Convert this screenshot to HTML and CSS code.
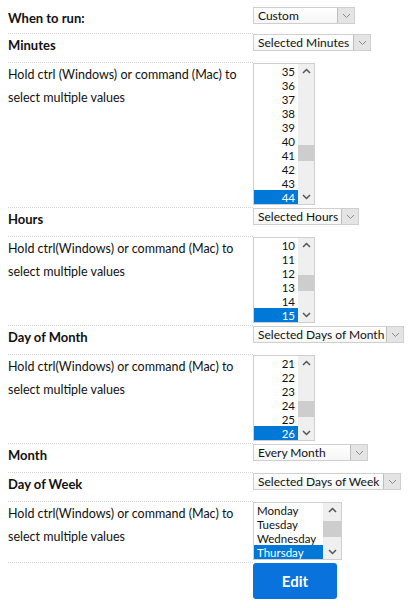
FILE: index.html
```html
<!DOCTYPE html>
<html lang="en">

<head>
    <meta charset="UTF-8">
    <meta name="viewport" content="width=device-width, initial-scale=1.0">
    <title>Schedule</title>
    <link rel="stylesheet" href="styles.css">
</head>

<body>
    <div class="form">
        <!-- when to run -->
        <div class="row first">
            <div class="label title">When to run:</div>
            <div class="field">
                <div class="select w-custom">
                    <span class="value">Custom</span>
                    <span class="arrow"><svg width="9" height="6" viewBox="0 0 9 6"><polyline points="1,1 4.5,4.5 8,1" fill="none" stroke="#8a8a8a" stroke-width="1"/></svg></span>
                </div>
            </div>
        </div>

        <!-- minutes -->
        <div class="row">
            <div class="label title">Minutes</div>
            <div class="field">
                <div class="select w-minutes">
                    <span class="value">Selected Minutes</span>
                    <span class="arrow"><svg width="9" height="6" viewBox="0 0 9 6"><polyline points="1,1 4.5,4.5 8,1" fill="none" stroke="#8a8a8a" stroke-width="1"/></svg></span>
                </div>
            </div>
        </div>
        <div class="row">
            <div class="label hint">Hold ctrl (Windows) or command (Mac) to select multiple values</div>
            <div class="field list-field">
                <div class="listbox numbers">
                    <div class="options">
                        <div class="option">35</div>
                        <div class="option">36</div>
                        <div class="option">37</div>
                        <div class="option">38</div>
                        <div class="option">39</div>
                        <div class="option">40</div>
                        <div class="option">41</div>
                        <div class="option">42</div>
                        <div class="option">43</div>
                        <div class="option selected">44</div>
                    </div>
                    <div class="scrollbar">
                        <span class="up"><svg width="9" height="6" viewBox="0 0 9 6"><polyline points="1,5 4.5,1.5 8,5" fill="none" stroke="#555" stroke-width="1.5"/></svg></span>
                        <span class="track"><span class="thumb t-minutes"></span></span>
                        <span class="down"><svg width="9" height="6" viewBox="0 0 9 6"><polyline points="1,1 4.5,4.5 8,1" fill="none" stroke="#555" stroke-width="1.5"/></svg></span>
                    </div>
                </div>
            </div>
        </div>

        <!-- hours -->
        <div class="row">
            <div class="label title">Hours</div>
            <div class="field">
                <div class="select w-hours">
                    <span class="value">Selected Hours</span>
                    <span class="arrow"><svg width="9" height="6" viewBox="0 0 9 6"><polyline points="1,1 4.5,4.5 8,1" fill="none" stroke="#8a8a8a" stroke-width="1"/></svg></span>
                </div>
            </div>
        </div>
        <div class="row">
            <div class="label hint">Hold ctrl(Windows) or command (Mac) to select multiple values</div>
            <div class="field list-field">
                <div class="listbox numbers">
                    <div class="options">
                        <div class="option">10</div>
                        <div class="option">11</div>
                        <div class="option">12</div>
                        <div class="option">13</div>
                        <div class="option">14</div>
                        <div class="option selected">15</div>
                    </div>
                    <div class="scrollbar">
                        <span class="up"><svg width="9" height="6" viewBox="0 0 9 6"><polyline points="1,5 4.5,1.5 8,5" fill="none" stroke="#555" stroke-width="1.5"/></svg></span>
                        <span class="track"><span class="thumb t-hours"></span></span>
                        <span class="down"><svg width="9" height="6" viewBox="0 0 9 6"><polyline points="1,1 4.5,4.5 8,1" fill="none" stroke="#555" stroke-width="1.5"/></svg></span>
                    </div>
                </div>
            </div>
        </div>

        <!-- day of month -->
        <div class="row">
            <div class="label title">Day of Month</div>
            <div class="field">
                <div class="select w-days">
                    <span class="value">Selected Days of Month</span>
                    <span class="arrow"><svg width="9" height="6" viewBox="0 0 9 6"><polyline points="1,1 4.5,4.5 8,1" fill="none" stroke="#8a8a8a" stroke-width="1"/></svg></span>
                </div>
            </div>
        </div>
        <div class="row">
            <div class="label hint">Hold ctrl(Windows) or command (Mac) to select multiple values</div>
            <div class="field list-field">
                <div class="listbox numbers">
                    <div class="options">
                        <div class="option">21</div>
                        <div class="option">22</div>
                        <div class="option">23</div>
                        <div class="option">24</div>
                        <div class="option">25</div>
                        <div class="option selected">26</div>
                    </div>
                    <div class="scrollbar">
                        <span class="up"><svg width="9" height="6" viewBox="0 0 9 6"><polyline points="1,5 4.5,1.5 8,5" fill="none" stroke="#555" stroke-width="1.5"/></svg></span>
                        <span class="track"><span class="thumb t-days"></span></span>
                        <span class="down"><svg width="9" height="6" viewBox="0 0 9 6"><polyline points="1,1 4.5,4.5 8,1" fill="none" stroke="#555" stroke-width="1.5"/></svg></span>
                    </div>
                </div>
            </div>
        </div>

        <!-- month -->
        <div class="row">
            <div class="label title">Month</div>
            <div class="field">
                <div class="select w-month">
                    <span class="value">Every Month</span>
                    <span class="arrow"><svg width="9" height="6" viewBox="0 0 9 6"><polyline points="1,1 4.5,4.5 8,1" fill="none" stroke="#8a8a8a" stroke-width="1"/></svg></span>
                </div>
            </div>
        </div>

        <!-- day of week -->
        <div class="row">
            <div class="label title">Day of Week</div>
            <div class="field">
                <div class="select w-week">
                    <span class="value">Selected Days of Week</span>
                    <span class="arrow"><svg width="9" height="6" viewBox="0 0 9 6"><polyline points="1,1 4.5,4.5 8,1" fill="none" stroke="#8a8a8a" stroke-width="1"/></svg></span>
                </div>
            </div>
        </div>
        <div class="row">
            <div class="label hint">Hold ctrl(Windows) or command (Mac) to select multiple values</div>
            <div class="field list-field">
                <div class="listbox weekdays">
                    <div class="options">
                        <div class="option">Monday</div>
                        <div class="option">Tuesday</div>
                        <div class="option">Wednesday</div>
                        <div class="option selected">Thursday</div>
                    </div>
                    <div class="scrollbar">
                        <span class="up"><svg width="9" height="6" viewBox="0 0 9 6"><polyline points="1,5 4.5,1.5 8,5" fill="none" stroke="#555" stroke-width="1.5"/></svg></span>
                        <span class="track"><span class="thumb t-week"></span></span>
                        <span class="down"><svg width="9" height="6" viewBox="0 0 9 6"><polyline points="1,1 4.5,4.5 8,1" fill="none" stroke="#555" stroke-width="1.5"/></svg></span>
                    </div>
                </div>
            </div>
        </div>

        <!-- submit -->
        <div class="row last">
            <div class="label"></div>
            <div class="field">
                <button class="btn" type="button">Edit</button>
            </div>
        </div>
    </div>
</body>

</html>
```

FILE: styles.css
```css
/* default css */
body {
    margin: 0;
    padding: 0 8px;
    font-family: Lato, "Open Sans", Helvetica, sans-serif;
    font-size: 12.5px;
    color: #111;
    background: #fff;
}

/* form rows */
.row {
    display: flex;
}

.row.first {
    padding-top: 7px;
}

.label {
    width: 245px;
    flex: none;
    line-height: 22px;
    padding-bottom: 6px;
    border-bottom: 1px dotted #d4d4d4;
}

.row.first .label {
    padding-bottom: 4px;
}

.row.last .label {
    border-bottom: none;
}

.title {
    font-weight: bold;
    font-size: 13px;
}

.hint {
    line-height: 23px;
}

.field {
    flex: none;
}

.list-field {
    padding-bottom: 3px;
}

/* dropdowns */
.select {
    display: flex;
    height: 17px;
    border: 1px solid #cfcfcf;
    box-sizing: border-box;
    background: linear-gradient(#fff, #f6f6f6);
    font-size: 12px;
}

.select .value {
    flex: 1;
    padding-left: 4px;
    line-height: 15px;
    white-space: nowrap;
    overflow: hidden;
}

.select .arrow {
    width: 16px;
    flex: none;
    display: flex;
    align-items: center;
    justify-content: center;
    background: #e4e4e4;
    border-left: 1px solid #bdbdbd;
}

.w-custom { width: 102px; }
.w-minutes { width: 118px; }
.w-hours { width: 106px; }
.w-days { width: 151px; }
.w-month { width: 115px; }
.w-week { width: 148px; }

/* list boxes */
.listbox {
    display: flex;
    border: 1px solid #cfcfcf;
    background: #fff;
}

.options {
    display: flex;
    flex-direction: column;
    font-size: 11.5px;
}

.option {
    height: 13px;
    padding-top: 1px;
    line-height: 14px;
    white-space: nowrap;
    overflow: hidden;
}

.numbers .options {
    width: 44px;
}

.numbers .option {
    text-align: right;
    padding-right: 3px;
}

.weekdays .options {
    width: 69px;
}

.weekdays .option {
    padding-left: 3px;
}

.option.selected {
    background: #0078d7;
    color: #fff;
}

.scrollbar {
    width: 16px;
    display: flex;
    flex-direction: column;
    background: #efefef;
}

.weekdays .scrollbar {
    width: 18px;
}

.scrollbar .up,
.scrollbar .down {
    height: 14px;
    display: flex;
    align-items: center;
    justify-content: center;
}

.scrollbar .track {
    flex: 1;
    position: relative;
}

.thumb {
    position: absolute;
    left: 0;
    right: 0;
    height: 16px;
    background: #cdcdcd;
}

.t-minutes { top: 67px; }
.t-hours { top: 23px; }
.t-days { top: 31px; }
.t-week { top: 4px; }

/* button */
.btn {
    width: 84px;
    height: 36px;
    border: none;
    border-radius: 3px;
    background: #0a72dc;
    color: #fff;
    font-family: inherit;
    font-size: 15px;
    font-weight: bold;
    cursor: pointer;
}
```
